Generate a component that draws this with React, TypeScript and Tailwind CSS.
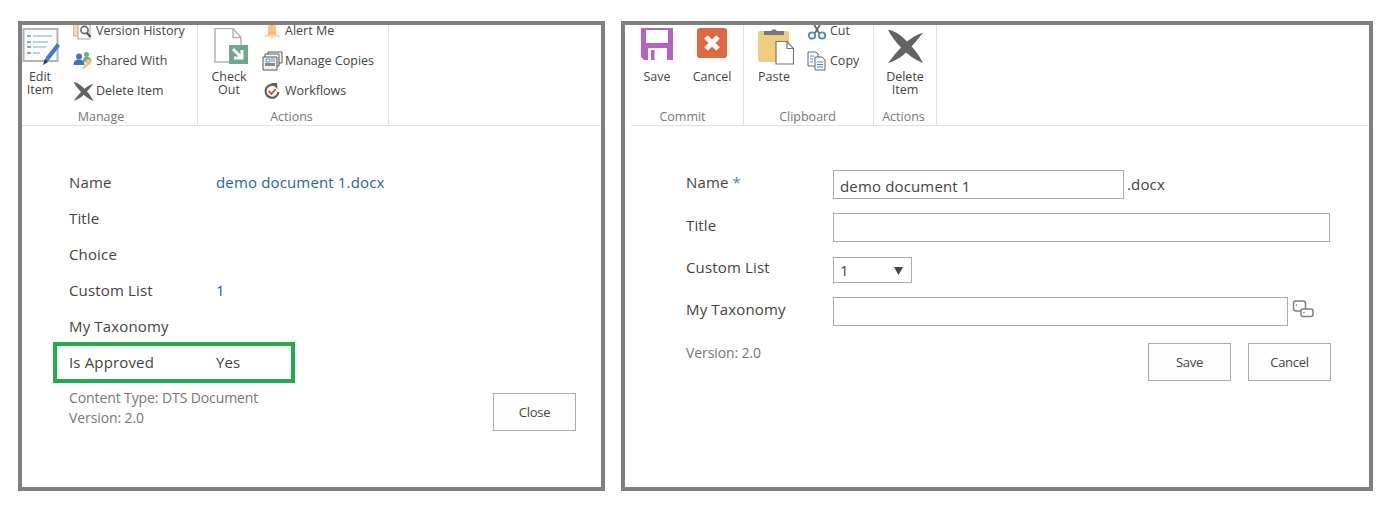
import type { ReactNode } from "react";

const EditItemIcon = () => (
  <svg width="40" height="38" viewBox="0 0 40 38">
    <rect x="3.500" y="1" width="34" height="32" fill="#fbfbfb" stroke="#b5b5b0" strokeWidth="2" />
    <g strokeWidth="1.5">
      <path d="M7 8h4M7 14h4M7 19h4M7 25h4" stroke="#5a93cf" />
      <path d="M13 8h19M13 14h15M13 19h13M13 25h7" stroke="#a8c2e0" />
    </g>
    <path d="M24 35l2-6L37 15l3 3-11 14z" fill="#3f80c4" />
    <path d="M23 37l2-6 3 3z" fill="#333" />
  </svg>
);

const VersionHistoryIcon = () => (
  <svg width="20" height="20" viewBox="0 0 20 20">
    <rect x="0.500" y="0" width="10" height="15" fill="#f6d9b0" stroke="#eeb878" />
    <rect x="5" y="2" width="12" height="16" fill="#f7f7f7" stroke="#aaa" />
    <circle cx="11.500" cy="9" r="3.600" fill="#fff" stroke="#666" strokeWidth="1.6" />
    <path d="M14 12l3.500 4" stroke="#555" strokeWidth="2.200" />
  </svg>
);

const SharedWithIcon = () => (
  <svg width="20" height="20" viewBox="0 0 20 20">
    <circle cx="13.500" cy="3.500" r="2.500" fill="#72ab8d" />
    <path d="M10 10c0-3 1.500-4.500 3.500-4.500s5 1.500 5 4.500l-5 2z" fill="#72ab8d" />
    <circle cx="6" cy="5.500" r="3" fill="#3f79bd" />
    <path d="M0.500 14c0-4 2-5.500 5.500-5.500s5.500 1.500 5.500 5.500z" fill="#3f79bd" />
    <circle cx="15.500" cy="11" r="2.800" fill="#f3c27b" />
    <path d="M13.500 12.500l-4.500 4.500 2 1.500 4.500-4.500z" fill="#f3c27b" />
  </svg>
);

const CrossIcon = ({ size }: { size: number }) => (
  <svg width={size} height={size} viewBox="0 0 20 20">
    <path d="M0.500 1Q5 1.500 10 6.500Q16 12 19.500 19Q13 16.500 8 11Q3 6 0.500 1z" fill="#636363" />
    <path d="M19.500 2.500Q14 4 9 9Q4 14 0.500 19Q7 17 11.500 12Q16 7 19.500 2.500z" fill="#636363" />
  </svg>
);

const CheckOutIcon = () => (
  <svg width="38" height="38" viewBox="0 0 38 38">
    <path d="M5 0.500h18l8 9V34H5z" fill="#fff" stroke="#b4b4ae" strokeWidth="1.5" />
    <path d="M23 0.500v9h8" fill="none" stroke="#b4b4ae" strokeWidth="1.5" />
    <rect x="19" y="17" width="19" height="19" fill="#6ca88e" />
    <path d="M23 21l9 9M32 22v8h-8" fill="none" stroke="#fff" strokeWidth="3" />
  </svg>
);

const BellIcon = () => (
  <svg width="18" height="18" viewBox="0 0 18 18">
    <path d="M5 12V6a4 4 0 0 1 8 0v6l2 2H3z" fill="#f3c27b" />
    <rect x="1" y="13" width="16" height="2" rx="1" fill="#f6d9b0" />
    <path d="M7.500 15.500h3l-1.500 2z" fill="#f3c27b" />
  </svg>
);

const ManageCopiesIcon = () => (
  <svg width="21" height="20" viewBox="0 0 21 20">
    <path d="M6 1h14v11H6z" fill="#fff" stroke="#555" />
    <path d="M3 3h14v12H3z" fill="#fff" stroke="#555" />
    <path d="M1 6h14v13H1z" fill="#f4f4f4" stroke="#555" />
    <path d="M3 12h10v3H3z" fill="#888" />
    <path d="M4 8h4v3H4zM9 8h4M9 10h4" fill="none" stroke="#6d93c0" />
  </svg>
);

const WorkflowsIcon = () => (
  <svg width="18" height="18" viewBox="0 0 18 18">
    <path d="M13.500 4.500A6.500 6.500 0 1 0 15.500 10" fill="none" stroke="#5e5e5e" strokeWidth="2.200" />
    <path d="M8 1l6 0 0.500 6z" fill="#5e5e5e" />
    <path d="M5.500 9l3 3 4-5" fill="none" stroke="#d4553e" strokeWidth="2" />
  </svg>
);

const SaveIcon = () => (
  <svg width="32" height="32" viewBox="0 0 32 32">
    <path d="M0 1a1 1 0 0 1 1-1h30a1 1 0 0 1 1 1v31H3l-3-3z" fill="#b562c4" />
    <rect x="5" y="2" width="22" height="13" fill="#fff" />
    <rect x="7" y="20" width="19" height="12" fill="#fff" />
    <rect x="10" y="22" width="3.500" height="10" fill="#b562c4" />
  </svg>
);

const CancelIcon = () => (
  <svg width="30" height="30" viewBox="0 0 30 30">
    <rect width="30" height="30" rx="3" fill="#dd6842" />
    <path d="M9 9l12 12M21 9L9 21" stroke="#fff" strokeWidth="5" />
  </svg>
);

const PasteIcon = () => (
  <svg width="40" height="38" viewBox="0 0 40 38">
    <rect x="4" y="3" width="31" height="31" rx="2" fill="#f0cd7e" />
    <path d="M10 7V3h7a3.500 3.500 0 0 1 6 0h7v4z" fill="#777" />
    <path d="M22 13.500h11l6.500 7V36H22z" fill="#fff" stroke="#777" strokeWidth="1.200" />
    <path d="M33 13.500v7h6.500" fill="none" stroke="#777" strokeWidth="1.200" />
  </svg>
);

const ScissorsIcon = () => (
  <svg width="20" height="20" viewBox="0 0 20 20">
    <path d="M5 0l7 12M15 0L8 12" stroke="#666" strokeWidth="1.800" />
    <circle cx="5" cy="14.500" r="3.200" fill="none" stroke="#4a86c8" strokeWidth="1.800" />
    <circle cx="15" cy="14.500" r="3.200" fill="none" stroke="#4a86c8" strokeWidth="1.800" />
  </svg>
);

const CopyIcon = () => (
  <svg width="20" height="20" viewBox="0 0 20 20">
    <path d="M1 1h8l2 2v12H1z" fill="#fff" stroke="#666" />
    <path d="M8 6h7l3 3v10H8z" fill="#fff" stroke="#666" />
    <path d="M3 5h4M3 8h3M3 11h3M10 11h6M10 13.500h6M10 16h6" stroke="#4a86c8" />
  </svg>
);

const TaxonomyIcon = () => (
  <svg width="22" height="18" viewBox="0 0 22 18">
    <rect x="1.500" y="1" width="12" height="10" rx="2.500" fill="#fff" stroke="#808080" strokeWidth="1.500" />
    <rect x="9" y="9" width="12" height="7.500" rx="2" fill="#fff" stroke="#808080" strokeWidth="1.500" />
    <circle cx="4.500" cy="5" r="0.800" fill="#808080" />
    <circle cx="12" cy="12.500" r="0.800" fill="#808080" />
  </svg>
);

const BigButton = ({ icon, children }: { icon: ReactNode; children: ReactNode }) => (
  <div className="flex flex-col items-center">
    <div className="h-[45px] pt-[3px] flex items-start justify-center">{icon}</div>
    <div className="text-center leading-[13px] text-[#444]">{children}</div>
  </div>
);

const SmallButton = ({ icon, label }: { icon: ReactNode; label: string }) => (
  <div className="h-[30px] flex items-center text-[#444]">
    <span className="w-[24px] flex justify-center">{icon}</span>
    <span className="ml-[1px] whitespace-nowrap">{label}</span>
  </div>
);

const Group = ({ label, className, labelClass, children }: { label: string; className: string; labelClass?: string; children: ReactNode }) => (
  <div className={`${className} h-[100px] shrink-0 border-r border-[#e1e1e1] flex flex-col justify-end overflow-hidden`}>
    <div className="flex-1 flex min-h-0">{children}</div>
    <div className={`h-[17px] text-center text-[#777] leading-[17px] ${labelClass ?? ""}`}>{label}</div>
  </div>
);

const FormBtn = ({ label }: { label: string }) => (
  <div className="w-[83px] h-[38px] pt-[1px] border border-[#ababab] bg-[#fdfdfd] flex items-center justify-center text-[13px] tracking-[-0.3px] text-[#444]">
    {label}
  </div>
);

const ReadRow = ({ label, value, blue }: { label: string; value?: string; blue?: boolean }) => (
  <div className="h-[36px] flex items-center text-[#444]">
    <div className="w-[147px]">{label}</div>
    <div className={blue ? "text-[#2d5fa8]" : ""}>{value}</div>
  </div>
);

const EditRow = ({ label, star, className, children }: { label: string; star?: boolean; className: string; children: ReactNode }) => (
  <div className={`flex items-center ${className}`}>
    <div className="w-[147px] pb-[5px] text-[#444]">
      {label}
      {star && <span className="text-[#4f86c6]"> *</span>}
    </div>
    {children}
  </div>
);

export default function App() {
  return (
    <div className="w-[1392px] h-[518px] bg-white flex pl-[18px] pt-[21px] font-['Open_Sans','Noto_Sans',sans-serif] text-[15px] tracking-[0.15px]">
      <section className="w-[587px] h-[470px] border-4 border-[#808080] overflow-hidden flex flex-col">
        <div className="h-[101px] shrink-0 border-b border-[#e1e1e1] flex text-[12.500px] tracking-[0px]">
          <Group label="Manage" className="w-[176px]" labelClass="pr-[17px]">
            <div className="w-[36px]">
              <BigButton icon={<EditItemIcon />}>
                Edit
                <br />
                Item
              </BigButton>
            </div>
            <div className="ml-[13px] -mt-[9px]">
              <SmallButton icon={<VersionHistoryIcon />} label="Version History" />
              <SmallButton icon={<SharedWithIcon />} label="Shared With" />
              <SmallButton icon={<CrossIcon size={21} />} label="Delete Item" />
            </div>
          </Group>
          <Group label="Actions" className="w-[191px]" labelClass="pr-[3px]">
            <div className="w-[62px]">
              <BigButton icon={<CheckOutIcon />}>
                Check
                <br />
                Out
              </BigButton>
            </div>
            <div className="-mt-[9px]">
              <SmallButton icon={<BellIcon />} label="Alert Me" />
              <SmallButton icon={<ManageCopiesIcon />} label="Manage Copies" />
              <SmallButton icon={<WorkflowsIcon />} label="Workflows" />
            </div>
          </Group>
        </div>

        <div className="pl-[47px] pt-[38px] pr-[25px]">
          <ReadRow label="Name" value="demo document 1.docx" blue />
          <ReadRow label="Title" />
          <ReadRow label="Choice" />
          <ReadRow label="Custom List" value="1" blue />
          <ReadRow label="My Taxonomy" />
          <div className="relative">
            <ReadRow label="Is Approved" value="Yes" />
            <div className="absolute -left-[16px] top-[-2px] w-[242px] h-[41px] border-4 border-[#22ac4b]" />
          </div>
          <div className="flex justify-between mt-[8px] text-[14px] tracking-[-0.1px] text-[#777]">
            <div className="leading-[20px]">
              <div>Content Type: DTS Document</div>
              <div>Version: 2.0</div>
            </div>
            <div className="mt-[5px]">
              <FormBtn label="Close" />
            </div>
          </div>
        </div>
      </section>

      <section className="ml-[16px] w-[752px] h-[470px] border-4 border-[#808080] overflow-hidden flex flex-col">
        <div className="h-[101px] shrink-0 border-b border-[#e1e1e1] ml-[6px] flex text-[12.500px] tracking-[0px]">
          <Group label="Commit" className="w-[113px]" labelClass="pr-[9px]">
            <div className="flex">
              <div className="w-[52px]">
                <BigButton icon={<SaveIcon />}>Save</BigButton>
              </div>
              <div className="w-[58px]">
                <BigButton icon={<CancelIcon />}>Cancel</BigButton>
              </div>
            </div>
          </Group>
          <Group label="Clipboard" className="w-[130px]" labelClass="pr-[2px]">
            <div className="w-[60px]">
              <BigButton icon={<PasteIcon />}>Paste</BigButton>
            </div>
            <div className="ml-[1px] -mt-[9px]">
              <SmallButton icon={<ScissorsIcon />} label="Cut" />
              <SmallButton icon={<CopyIcon />} label="Copy" />
            </div>
          </Group>
          <Group label="Actions" className="w-[63px]" labelClass="pr-[3px]">
            <div className="w-full">
              <BigButton icon={<CrossIcon size={37} />}>
                Delete
                <br />
                Item
              </BigButton>
            </div>
          </Group>
        </div>

        <div className="pl-[61px] pt-[44px]">
          <EditRow label="Name" star className="h-[29px]">
            <div className="w-[291px] h-[29px] border border-[#ababab] px-[6px] pt-[5px] leading-[20px] text-[#444]">demo document 1</div>
            <span className="ml-[3px] text-[#444]">.docx</span>
          </EditRow>
          <EditRow label="Title" className="h-[29px] mt-[14px]">
            <div className="w-[497px] h-[29px] border border-[#ababab]" />
          </EditRow>
          <EditRow label="Custom List" className="h-[26px] mt-[15px]">
            <div className="w-[79px] h-[26px] border border-[#ababab] pl-[6px] pr-[8px] pt-[1px] flex items-center justify-between text-[#444]">
              <span>1</span>
              <svg width="9" height="8" viewBox="0 0 9 8">
                <path d="M0 0h9L4.500 8z" fill="#444" />
              </svg>
            </div>
          </EditRow>
          <EditRow label="My Taxonomy" className="h-[29px] mt-[14px]">
            <div className="w-[455px] h-[29px] border border-[#ababab]" />
            <span className="ml-[4px] -mt-[5px]">
              <TaxonomyIcon />
            </span>
          </EditRow>
          <div className="flex mt-[17px]">
            <div className="w-[462px] text-[14px] tracking-[-0.1px] text-[#777] leading-[20px]">Version: 2.0</div>
            <div className="flex gap-[17px]">
              <FormBtn label="Save" />
              <FormBtn label="Cancel" />
            </div>
          </div>
        </div>
      </section>
    </div>
  );
}
